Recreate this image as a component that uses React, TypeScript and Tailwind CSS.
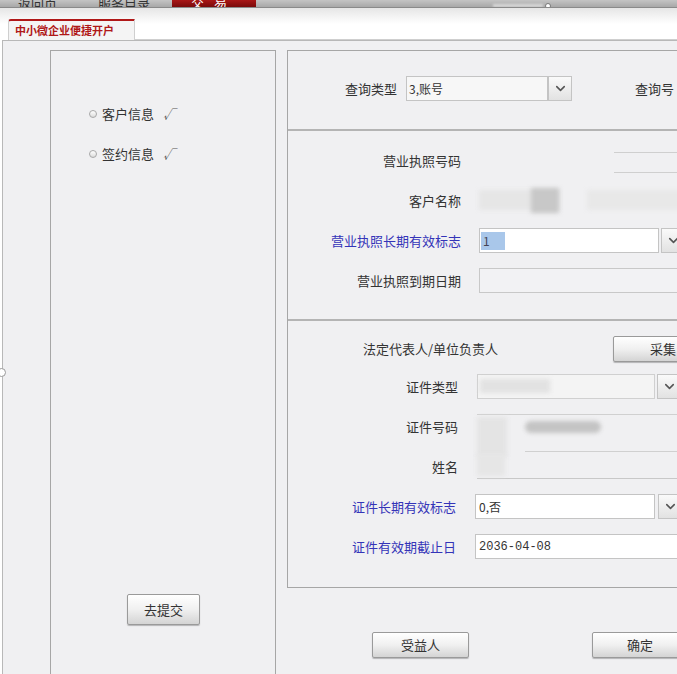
import { ChevronDown } from "lucide-react";

const font = "font-['Microsoft_YaHei','Noto_Sans_CJK_SC',sans-serif]";

function Arrow({ className = "" }: { className?: string }) {
  return (
    <div
      className={`flex items-center justify-center w-[24px] h-[25px] border border-[#c4c4c4] bg-gradient-to-b from-[#fafafa] to-[#e2e2e2] ${className}`}
    >
      <ChevronDown size={15} strokeWidth={2.5} className="text-[#555]" />
    </div>
  );
}

function Btn({ label, className = "" }: { label: string; className?: string }) {
  return (
    <button
      className={`flex items-center justify-center rounded-[2px] border border-[#9a9a9a] bg-gradient-to-b from-[#ffffff] via-[#f0f0f0] to-[#d4d4d4] text-[13px] text-[#333] shadow-[0_1px_1px_rgba(0,0,0,0.25)] ${className}`}
    >
      {label}
    </button>
  );
}

function Blur({ className }: { className: string }) {
  return <div className={`absolute blur-[2px] ${className}`} />;
}

function Row({
  label,
  blue,
  labelW,
  gap,
  children,
}: {
  label: string;
  blue?: boolean;
  labelW: string;
  gap: string;
  children: React.ReactNode;
}) {
  return (
    <div className={`flex items-center h-[25px] ${gap}`}>
      <div
        className={`${labelW} shrink-0 text-right text-[13px] ${blue ? "text-[#3434b8]" : "text-[#333]"}`}
      >
        {label}
      </div>
      {children}
    </div>
  );
}

export default function App() {
  return (
    <div className={`w-[677px] h-[674px] overflow-hidden bg-white ${font}`}>
      {/* top nav strip, cropped by the screenshot */}
      <div className="h-[8px] overflow-hidden bg-gradient-to-b from-[#c4c4c4] to-[#a8a8a8] flex items-end border-b border-[#8a8a8a]">
        <div className="ml-[18px] w-[44px] -mb-[6px] text-[13px] text-[#333]">返回页</div>
        <div className="ml-[36px] w-[60px] -mb-[6px] text-[13px] text-[#333]">服务目录</div>
        <div className="ml-[14px] w-[84px] h-[8px] bg-gradient-to-b from-[#b01818] to-[#7a0a0a] flex justify-center">
          <span className="-mt-[7px] text-[13px] text-white tracking-[10px]">交易</span>
        </div>
        <div className="ml-auto mr-[126px] flex items-end gap-[2px]">
          <div className="w-[50px] h-[3px] bg-[#d8d8d8] blur-[1px]" />
          <div className="w-[6px] h-[6px] -mb-[2px] rounded-full border border-[#777] bg-white" />
        </div>
      </div>

      {/* tab row */}
      <div className="h-[32px] bg-gradient-to-b from-[#e6e6e6] via-white to-white flex items-end pl-[8px]">
        <div className="w-[127px] h-[21px] border-t-2 border-[#b01818] border-x border-x-[#cfcfcf] bg-[#f4f4f4] flex items-center pl-[6px] text-[11px] font-bold text-[#b01818] rounded-tl-[3px]">
          中小微企业便捷开户
        </div>
        <div className="flex-1 border-b border-[#cfcfcf]" />
      </div>

      {/* body */}
      <div className="relative h-[634px] ml-[2px] border-l border-t border-[#b8b8b8] bg-[#f0f0f2] flex gap-[11px] pl-[47px] pt-[9px]">
        <div className="absolute -left-[6px] top-[327px] w-[9px] h-[9px] rounded-full border border-[#999] bg-white" />

        {/* left panel */}
        <div className="w-[226px] shrink-0 h-[640px] border border-[#a6a6a6] bg-[#f0f0f2] flex flex-col pl-[38px] pt-[54px]">
          <div className="flex flex-col gap-[22px]">
            {["客户信息", "签约信息"].map((t) => (
              <div key={t} className="flex items-center h-[18px] text-[13px] text-[#333]">
                <div className="w-[8px] h-[8px] rounded-full border border-[#a8a8a8] bg-gradient-to-b from-white to-[#dcdcdc]" />
                <span className="ml-[5px]">{t}</span>
                <span className="ml-[9px] text-[12px] text-[#555] italic">√</span>
              </div>
            ))}
          </div>
          <Btn label="去提交" className="mt-[431px] ml-[38px] w-[73px] h-[31px]" />
        </div>

        {/* right panel */}
        <div className="w-[420px] shrink-0 flex flex-col">
          <div className="border border-[#a6a6a6] bg-[#f0f0f2]">
            {/* query */}
            <div className="h-[80px] border-b-2 border-[#b4b4b4] flex items-start pt-[25px]">
              <div className="w-[109px] text-right text-[13px] text-[#333] leading-[25px]">查询类型</div>
              <div className="ml-[9px] flex">
                <div className="w-[142px] h-[25px] border border-[#c4c4c4] bg-[#f7f7f7] text-[12px] text-[#333] flex items-center pl-[2px]">
                  3,账号
                </div>
                <Arrow />
              </div>
              <div className="ml-[63px] text-[13px] text-[#333] leading-[25px]">查询号</div>
            </div>

            {/* licence */}
            <div className="h-[190px] border-b-2 border-[#b4b4b4] flex flex-col gap-[15px] pt-[17px]">
              <Row label="营业执照号码" labelW="w-[173px]" gap="gap-[18px]">
                <div className="relative flex-1 h-[25px]">
                  <div className="absolute left-[135px] top-[4px] w-[100px] border-t border-[#cfcfcf]" />
                  <div className="absolute left-[135px] top-[24px] w-[100px] border-t border-[#cfcfcf]" />
                </div>
              </Row>
              <Row label="客户名称" labelW="w-[173px]" gap="gap-[18px]">
                <div className="relative flex-1 h-[25px]">
                  <Blur className="left-0 top-[2px] w-[80px] h-[20px] bg-[#e6e6e6]" />
                  <Blur className="left-[52px] top-[0px] w-[28px] h-[25px] bg-[#c8c8c8]" />
                  <Blur className="left-[108px] top-[2px] w-[95px] h-[20px] bg-[#e8e8e8]" />
                </div>
              </Row>
              <Row label="营业执照长期有效标志" blue labelW="w-[173px]" gap="gap-[18px]">
                <div className="flex">
                  <div className="relative w-[180px] h-[25px] border border-[#c4c4c4] bg-white flex items-center pl-[1px]">
                    <span className="bg-[#a9c7ea] text-[12px] text-[#445] px-[2px] w-[24px]">1</span>
                  </div>
                  <Arrow className="ml-[2px]" />
                </div>
              </Row>
              <Row label="营业执照到期日期" labelW="w-[173px]" gap="gap-[18px]">
                <div className="w-[220px] h-[25px] border border-[#c8c8c8] bg-[#f2f2f4]" />
              </Row>
            </div>

            {/* legal representative */}
            <div className="h-[266px] flex flex-col pt-[15px]">
              <div className="flex items-center h-[26px]">
                <div className="ml-[75px] text-[13px] text-[#333]">法定代表人/单位负责人</div>
                <Btn label="采集" className="ml-[115px] w-[90px] h-[26px] justify-end pr-[26px]" />
              </div>
              <div className="flex flex-col gap-[15px] mt-[12px]">
                <Row label="证件类型" labelW="w-[170px]" gap="gap-[19px]">
                  <div className="flex">
                    <div className="relative w-[178px] h-[25px] border border-[#d0d0d0] bg-[#f4f4f4]">
                      <Blur className="left-[2px] top-[4px] w-[70px] h-[14px] bg-[#e2e2e2]" />
                    </div>
                    <Arrow className="ml-[2px]" />
                  </div>
                </Row>
                <Row label="证件号码" labelW="w-[170px]" gap="gap-[19px]">
                  <div className="relative w-[220px] h-[25px] border-t border-[#d0d0d0]">
                    <Blur className="left-[0px] top-[2px] w-[30px] h-[40px] bg-[#e4e4e4]" />
                    <Blur className="left-[48px] top-[6px] w-[76px] h-[12px] rounded-full bg-[#c4c4c4]" />
                  </div>
                </Row>
                <Row label="姓名" labelW="w-[170px]" gap="gap-[19px]">
                  <div className="relative w-[220px] h-[25px] border-b border-[#c8c8c8]">
                    <div className="absolute left-[48px] -top-[3px] w-[180px] border-t border-[#d0d0d0]" />
                    <Blur className="left-0 top-[0px] w-[28px] h-[22px] bg-[#e6e6e6]" />
                  </div>
                </Row>
                <Row label="证件长期有效标志" blue labelW="w-[168px]" gap="gap-[19px]">
                  <div className="flex">
                    <div className="w-[180px] h-[25px] border border-[#c4c4c4] bg-white text-[12px] text-[#333] flex items-center pl-[3px]">
                      0,否
                    </div>
                    <Arrow className="ml-[3px]" />
                  </div>
                </Row>
                <Row label="证件有效期截止日" blue labelW="w-[168px]" gap="gap-[19px]">
                  <div className="w-[220px] h-[25px] border border-[#c4c4c4] bg-white text-[12px] text-[#333] flex items-center pl-[3px] font-['Liberation_Mono','Noto_Sans_CJK_SC',monospace]">
                    2036-04-08
                  </div>
                </Row>
              </div>
            </div>
          </div>

          <div className="flex mt-[44px]">
            <Btn label="受益人" className="ml-[85px] w-[97px] h-[26px]" />
            <Btn label="确定" className="ml-[123px] w-[95px] h-[26px] justify-start pl-[34px]" />
          </div>
        </div>
      </div>
    </div>
  );
}
